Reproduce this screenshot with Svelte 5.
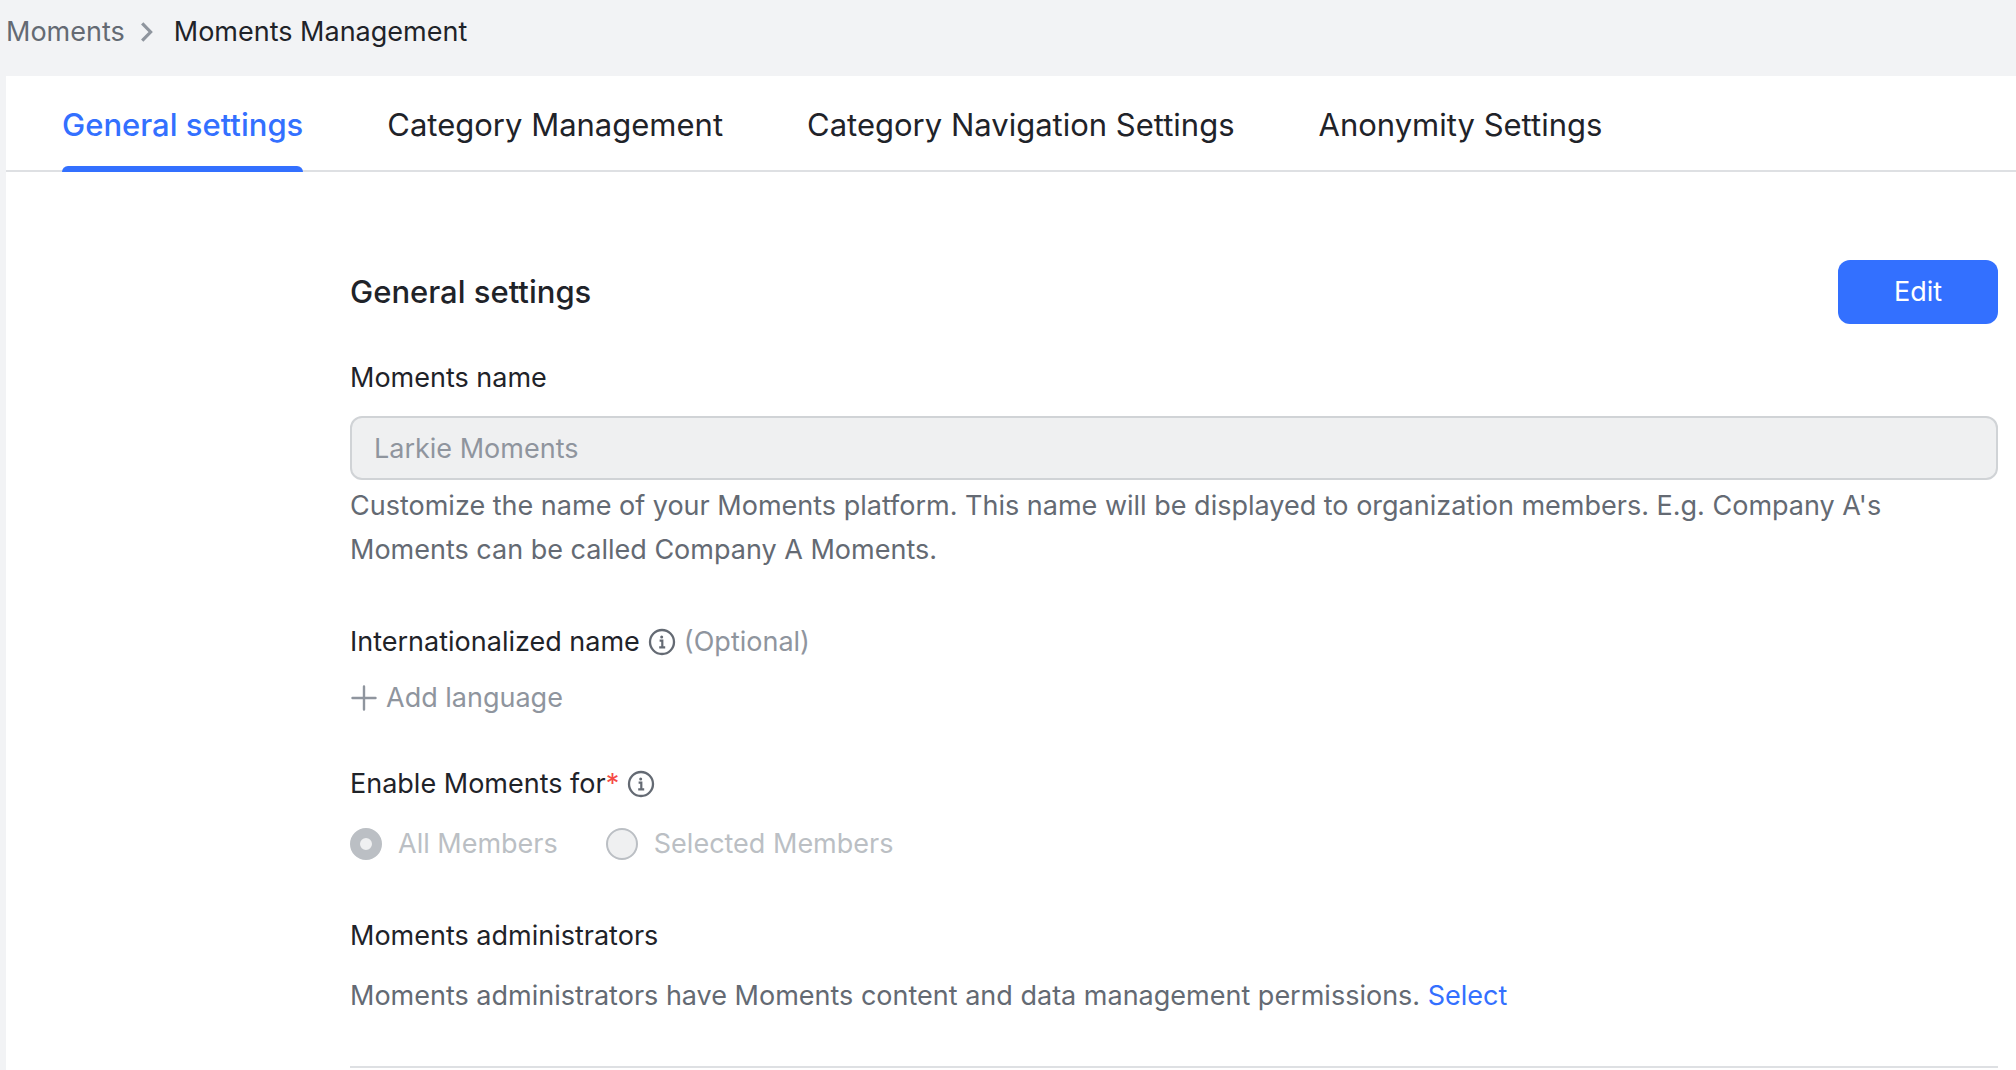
<script lang="ts">
  const tabs = [
    { id: "general", label: "General settings" },
    { id: "category", label: "Category Management" },
    { id: "navigation", label: "Category Navigation Settings" },
    { id: "anonymity", label: "Anonymity Settings" },
  ];

  let activeTab = $state("general");
  let editing = $state(false);
  let name = $state("Larkie Moments");
  let audience = $state("all");
</script>

{#snippet infoIcon()}
  <svg class="icon" viewBox="0 0 28 28" fill="none" aria-hidden="true">
    <circle cx="14" cy="14" r="12" stroke="currentColor" stroke-width="2.3" />
    <circle cx="13.7" cy="8.9" r="1.5" fill="currentColor" />
    <path d="M11.6 12.6H14.3V19.3M11.2 19.3H17.2" stroke="currentColor" stroke-width="2.2" />
  </svg>
{/snippet}

<div class="page">
  <nav class="breadcrumb" aria-label="Breadcrumb">
    <a href="#moments">Moments</a>
    <svg class="chevron" viewBox="0 0 14 20" fill="none" aria-hidden="true">
      <path d="M2.2 1.4L10.6 10L2.2 18.6" stroke="currentColor" stroke-width="3.2" />
    </svg>
    <span aria-current="page">Moments Management</span>
  </nav>

  <main class="card">
    <div class="tabs" role="tablist">
      {#each tabs as tab (tab.id)}
        <button
          type="button"
          role="tab"
          class="tab"
          class:active={activeTab === tab.id}
          aria-selected={activeTab === tab.id}
          onclick={() => (activeTab = tab.id)}
        >
          {tab.label}
        </button>
      {/each}
    </div>

    <form class="content" onsubmit={(e) => e.preventDefault()}>
      <div class="title-row">
        <h1>General settings</h1>
        <button type="button" class="edit" onclick={() => (editing = !editing)}>Edit</button>
      </div>

      <div class="field">
        <label for="moments-name">Moments name</label>
        <input id="moments-name" class="text-input" type="text" bind:value={name} disabled={!editing} />
        <p class="help">
          Customize the name of your Moments platform. This name will be displayed to organization
          members. E.g. Company A's Moments can be called Company A Moments.
        </p>
      </div>

      <div class="field languages">
        <div class="label-row">
          <span>Internationalized name</span>
          {@render infoIcon()}
          <span class="optional">(Optional)</span>
        </div>
        <button type="button" class="add" disabled={!editing}>
          <svg viewBox="0 0 28 28" fill="none" aria-hidden="true">
            <path d="M14 2.5V25.5M2.5 14H25.5" stroke="currentColor" stroke-width="2.4" stroke-linecap="round" />
          </svg>
          Add language
        </button>
      </div>

      <fieldset class="field" disabled={!editing}>
        <legend class="label-row">
          <span>Enable Moments for<span class="required">*</span></span>
          {@render infoIcon()}
        </legend>
        <div class="radios">
          <label class="radio">
            <input type="radio" name="audience" value="all" bind:group={audience} />
            All Members
          </label>
          <label class="radio">
            <input type="radio" name="audience" value="selected" bind:group={audience} />
            Selected Members
          </label>
        </div>
      </fieldset>

      <div class="field">
        <h2>Moments administrators</h2>
        <p class="description">
          Moments administrators have Moments content and data management permissions.
          <a href="#select">Select</a>
        </p>
      </div>

      <hr />
    </form>
  </main>
</div>

<style>
  :global(body) {
    margin: 0;
    background: #f2f3f5;
  }

  .page {
    display: flex;
    flex-direction: column;
    box-sizing: border-box;
    min-height: 100vh;
    padding-left: 6px;
    font-family: Inter, "Liberation Sans", sans-serif;
    font-size: 27px;
    line-height: 44px;
    color: #1f2329;
  }

  button,
  input {
    font: inherit;
  }

  a {
    color: #3370ff;
    text-decoration: none;
  }

  h1,
  h2,
  p {
    margin: 0;
    font-weight: 400;
  }

  .breadcrumb {
    display: flex;
    align-items: center;
    padding: 10px 0 22px;
  }

  .breadcrumb a {
    color: #646a73;
  }

  .chevron {
    width: 14px;
    height: 20px;
    margin: 0 20px 0 15px;
    color: #8f959e;
  }

  .card {
    flex: 1;
    background: #fff;
  }

  .tabs {
    display: flex;
    gap: 84px;
    padding: 0 56px;
    box-shadow: inset 0 -2px #dee0e3;
  }

  .tab {
    position: relative;
    height: 96px;
    padding: 2px 0 0;
    border: none;
    background: none;
    font-size: 31px;
    color: #1f2329;
    cursor: pointer;
  }

  .tab.active {
    color: #3370ff;
    font-weight: 500;
  }

  .tab.active::after {
    content: "";
    position: absolute;
    right: 0;
    bottom: 0;
    left: 0;
    height: 6px;
    border-radius: 6px 6px 0 0;
    background: #3370ff;
  }

  .content {
    padding: 88px 18px 0 344px;
  }

  .title-row {
    display: flex;
    align-items: center;
    justify-content: space-between;
    margin-bottom: 32px;
  }

  h1 {
    font-size: 31px;
    font-weight: 500;
  }

  h2 {
    font-size: 27px;
  }

  .edit {
    min-width: 160px;
    height: 64px;
    border: none;
    border-radius: 12px;
    background: #3370ff;
    color: #fff;
    cursor: pointer;
  }

  .field {
    display: flex;
    flex-direction: column;
    min-width: 0;
    margin: 0 0 48px;
    padding: 0;
    border: none;
  }

  .languages {
    gap: 12px;
    margin-bottom: 42px;
  }

  .text-input {
    box-sizing: border-box;
    width: 100%;
    height: 64px;
    margin: 16px 0 4px;
    padding: 0 22px;
    border: 2px solid #d0d3d6;
    border-radius: 12px;
    color: #1f2329;
  }

  .text-input:disabled {
    background: #eff0f1;
    color: #8f959e;
  }

  .help,
  .description {
    color: #646a73;
  }

  .label-row {
    display: flex;
    align-items: center;
    gap: 8px;
    padding: 0;
  }

  .icon {
    width: 28px;
    height: 28px;
    color: #646a73;
  }

  .optional {
    color: #8f959e;
  }

  .required {
    color: #f54a45;
  }

  .add {
    display: flex;
    align-items: center;
    align-self: flex-start;
    gap: 8px;
    padding: 0;
    border: none;
    background: none;
    color: #8f959e;
  }

  .add svg {
    width: 28px;
    height: 28px;
  }

  .radios {
    display: flex;
    gap: 48px;
    margin-top: 16px;
  }

  .radio {
    display: flex;
    align-items: center;
    gap: 16px;
    color: #bbbfc4;
  }

  .radio input {
    box-sizing: border-box;
    width: 32px;
    height: 32px;
    margin: 0;
    border: 2px solid #bbbfc4;
    border-radius: 50%;
    background: #eff0f1;
    appearance: none;
  }

  .radio input:checked {
    border-width: 10px;
  }

  .description {
    margin-top: 16px;
  }

  hr {
    height: 2px;
    margin: 0;
    border: none;
    background: #dee0e3;
  }
</style>
